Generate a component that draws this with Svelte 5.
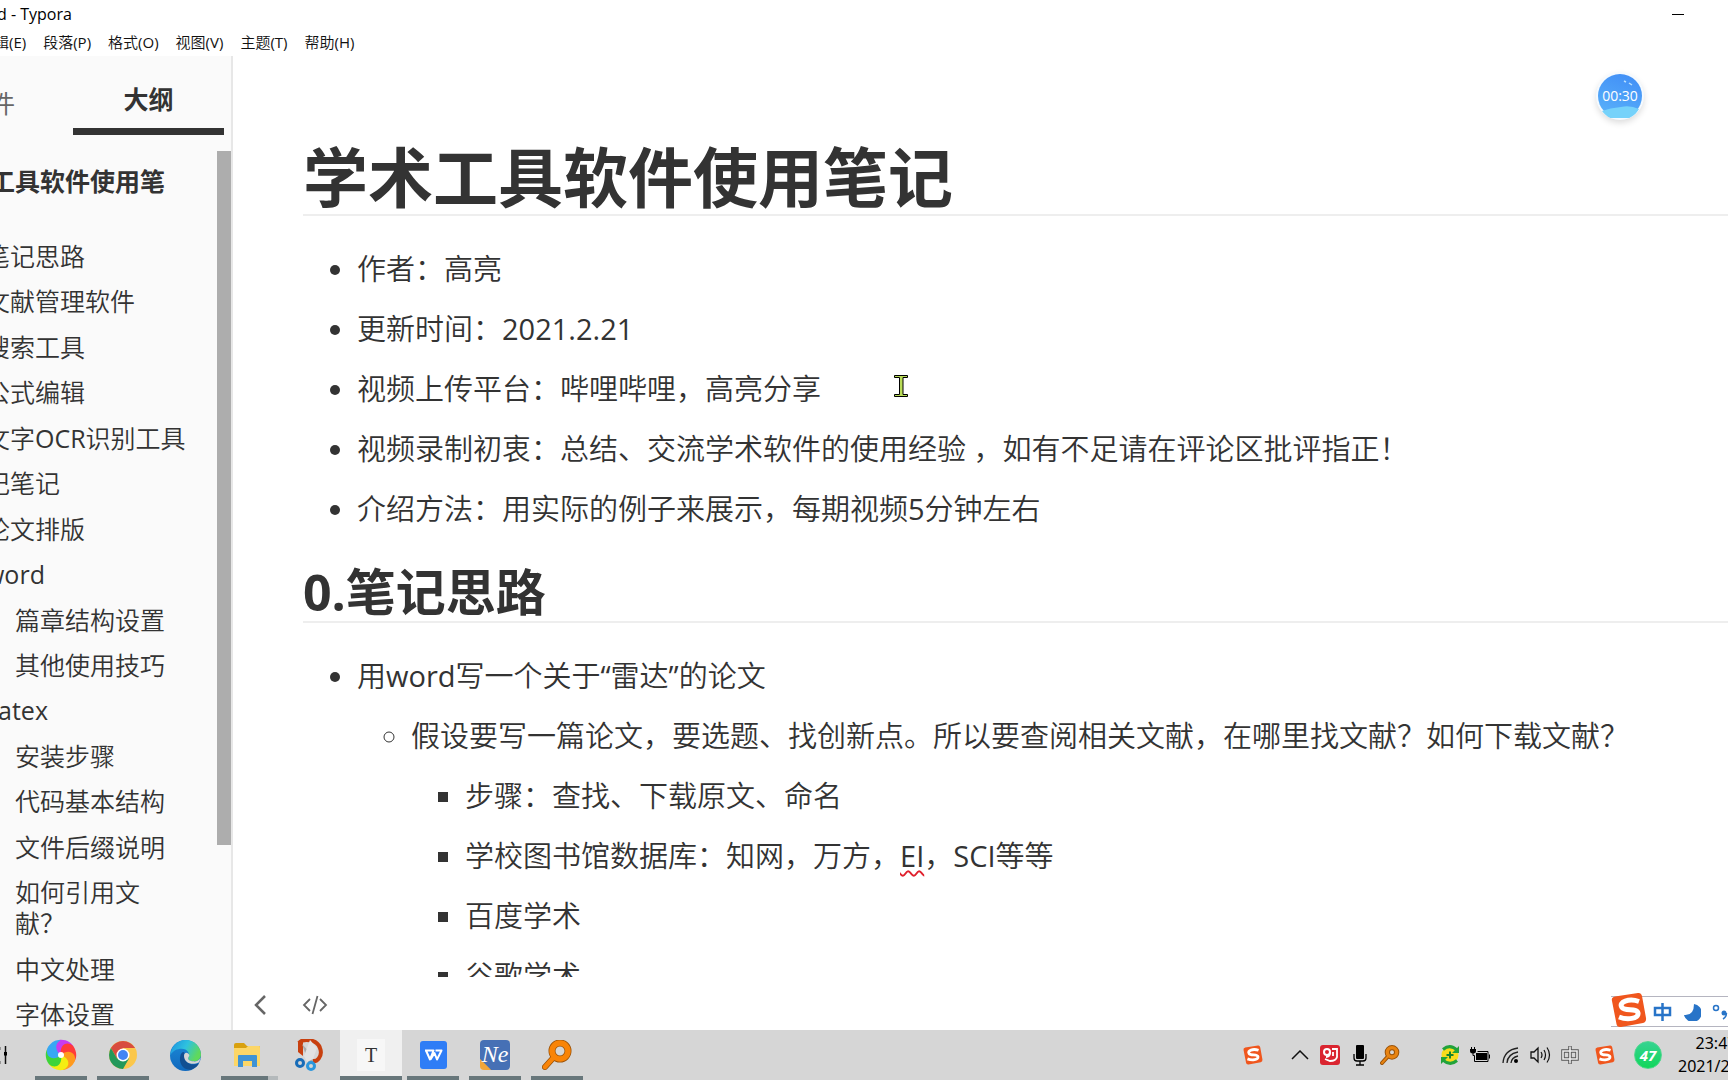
<script>
  const menus = ['辑(E)', '段落(P)', '格式(O)', '视图(V)', '主题(T)', '帮助(H)'];

  const outline = [
    { text: '笔记思路', level: 2 },
    { text: '文献管理软件', level: 2 },
    { text: '搜索工具', level: 2 },
    { text: '公式编辑', level: 2 },
    { text: '文字OCR识别工具', level: 2 },
    { text: '记笔记', level: 2 },
    { text: '论文排版', level: 2 },
    { text: 'word', level: 2 },
    { text: '篇章结构设置', level: 3 },
    { text: '其他使用技巧', level: 3 },
    { text: 'Latex', level: 2 },
    { text: '安装步骤', level: 3 },
    { text: '代码基本结构', level: 3 },
    { text: '文件后缀说明', level: 3 },
    { text: '如何引用文献？', level: 3 },
    { text: '中文处理', level: 3 },
    { text: '字体设置', level: 3 }
  ];

  const about = [
    '作者：高亮',
    '更新时间：2021.2.21',
    '视频上传平台：哔哩哔哩，高亮分享',
    '视频录制初衷：总结、交流学术软件的使用经验 ，如有不足请在评论区批评指正！',
    '介绍方法：用实际的例子来展示，每期视频5分钟左右'
  ];
  const petals = [0, 60, 120, 180, 240, 300];
  const petalColors = ['#c83cf0', '#ff3b3b', '#ff9a1f', '#f4ee12', '#3ed43a', '#38a8f4'];
</script>

{#snippet sogou(size)}
  <svg width={size} height={size} viewBox="0 0 36 36" aria-hidden="true">
    <path d="M1 9Q0 5.500 4 4.500L27 1Q30 .5 31 4L35 26Q35.500 30 32 31L10 35Q6 35.500 5.500 32Z" fill="#f0561d" />
    <path d="M28 9.500C18 6 7 10 11 15.500C14 19.500 26 16 27 21C28 27 16 28 8 25" fill="none" stroke="#fff" stroke-width="5" />
  </svg>
{/snippet}

<div class="app">
  <header class="titlebar">
    <span class="title">d - Typora</span>
    <button class="minimize" aria-label="最小化"><span class="dash"></span></button>
  </header>
  <nav class="menubar" aria-label="菜单">
    {#each menus as m}<button>{m}</button>{/each}
  </nav>

  <div class="workspace">
    <aside class="sidebar">
      <div class="tabs">
        <button class="tab files">件</button>
        <button class="tab active">大纲</button>
      </div>
      <div class="outline-wrap">
        <nav class="outline" aria-label="大纲">
          <a class="top" href="#top">工具软件使用笔</a>
          <div class="entries">
            {#each outline as o}
              <a class="level{o.level}" href="#{o.text}">{o.text}</a>
            {/each}
          </div>
        </nav>
        <div class="scroll"><div class="thumb"></div></div>
      </div>
    </aside>

    <section class="pane">
      <main class="editor">
        <h1 id="top">学术工具软件使用笔记</h1>
        <ul>
          {#each about as line}<li>{line}</li>{/each}
        </ul>
        <h2 id="笔记思路">0.笔记思路</h2>
        <ul>
          <li>用word写一个关于“雷达”的论文
            <ul>
              <li>假设要写一篇论文，要选题、找创新点。所以要查阅相关文献，在哪里找文献？如何下载文献？
                <ul>
                  <li>步骤：查找、下载原文、命名</li>
                  <li>学校图书馆数据库：知网，万方，<span class="typo">EI</span>，SCI等等</li>
                  <li>百度学术</li>
                  <li>谷歌学术</li>
                </ul>
              </li>
            </ul>
          </li>
        </ul>
      </main>
      <footer class="status">
        <button aria-label="收起侧边栏">
          <svg width="14" height="20" viewBox="0 0 14 20"><path d="M12 1L3 10L12 19" fill="none" stroke="#666" stroke-width="2.500" /></svg>
        </button>
        <button aria-label="源代码模式">
          <svg width="26" height="20" viewBox="0 0 26 20"><path d="M8 4L2 10L8 16M18 4L24 10L18 16M15.500 1L10.500 19" fill="none" stroke="#666" stroke-width="1.800" /></svg>
        </button>
      </footer>
    </section>
  </div>

  <footer class="taskbar">
    <div class="apps">
      <button class="task edge-cut" aria-label="任务视图">
        <svg width="8" height="22" viewBox="0 0 8 22"><path d="M5.500 2V20" stroke="#111" stroke-width="1.500" /><path d="M0 3v3M0 17v3" stroke="#555" /><rect x="4" y="8" width="3" height="3.500" /></svg>
      </button>
      <button class="task running" aria-label="360浏览器">
        <svg width="32" height="32" viewBox="-16 -16 32 32">
          {#each petals as a, i}
            <path d="M0 0C-9 -3 -10 -12 -2 -15C5 -16 11 -12 12.500 -8C7 -11 1 -8 0 0Z" fill={petalColors[i]} transform="rotate({a})" />
          {/each}
          <circle r="3" fill="#fff" />
        </svg>
      </button>
      <button class="task running" aria-label="Chrome">
        <svg width="28" height="28" viewBox="-14 -14 28 28">
          <circle r="14" fill="#fbc74b" />
          <path d="M0 -7H12.100A14 14 0 0 0 -12.100 -7L-6 3.500Z" fill="#d84c3f" />
          <path d="M-12.100 -7A14 14 0 0 0 0 14L6 3.500L-6 3.500Z" fill="#23985a" />
          <circle r="6.500" fill="#fff" /><circle r="5" fill="#4285f4" />
        </svg>
      </button>
      <button class="task" aria-label="Edge">
        <svg width="31" height="31" viewBox="0 0 32 32">
          <defs>
            <linearGradient id="eg" x1="0" y1="0" x2="1" y2="0.400"><stop offset="0" stop-color="#1a8fe0" /><stop offset=".55" stop-color="#2fc2df" /><stop offset="1" stop-color="#5fd95c" /></linearGradient>
            <linearGradient id="eb" x1="0" y1="0" x2="0" y2="1"><stop offset="0" stop-color="#1b8ad8" /><stop offset="1" stop-color="#1169bd" /></linearGradient>
          </defs>
          <circle cx="16" cy="16" r="16" fill="url(#eb)" />
          <path d="M1 12C4 2 12 0 16 0C26 0 32 8 32 15C32 20 28 22.500 24 22C20 21.500 18 20 19 18C21 14 18 9 12 9C7 9 3 11 0 16Z" fill="url(#eg)" />
          <path d="M11 15C8 24 14 32 22 30.500C26 29 28.500 27 30 24C22 28 14 23 15 15C15.500 12 13 11 11 15Z" fill="#124f92" />
          <path d="M20 16C19 12 14 12 14.500 17C15 23 22 27 30 23L32 18C30 21 27 22.500 24 22C20 21.500 18 20 19 18Z" fill="#d6d6d6" />
        </svg>
      </button>
      <button class="task running stacked" aria-label="文件资源管理器">
        <svg width="28" height="26" viewBox="0 0 28 26">
          <path d="M1 3Q1 1 3 1H11L14 4H26Q27 4 27 6V10H1Z" fill="#d9a10f" />
          <path d="M1 6H13L15 4H26Q27 4 27 6V24H1Z" fill="#fcd667" />
          <path d="M5 25V14Q5 13 6 13H23Q24 13 24 14V25H19V19H10V25Z" fill="#3f93d5" />
        </svg>
      </button>
      <button class="task" aria-label="截图工具">
        <svg width="28" height="32" viewBox="0 0 28 32">
          <path d="M4 4C8 -1 22 0 25 9C28 17 22 25 15 21" fill="none" stroke="#c8400f" stroke-width="4" />
          <path d="M3 3V13L8 17V3Z" fill="#c8400f" />
          <path d="M7 5L18 17L18 24L14 25Z" fill="#aaa" /><path d="M15 1L22 9L18 20L12 23L9 17Z" fill="#e2e2e2" />
          <circle cx="5" cy="24" r="3.500" fill="none" stroke="#176cb8" stroke-width="3" />
          <circle cx="16" cy="27" r="3.500" fill="none" stroke="#2b96dc" stroke-width="3" />
        </svg>
      </button>
      <button class="task running current" aria-label="Typora"><span class="typora">T</span></button>
      <button class="task running" aria-label="WPS">
        <svg width="27" height="28" viewBox="0 0 27 28"><rect width="27" height="28" rx="3" fill="#2e7df6" /><path d="M5 9.500H13.500L10 18.500L6 9.500M10.500 18.500L14.500 12L17 18.500L21.500 9.500H15.500" fill="none" stroke="#fff" stroke-width="2" stroke-linejoin="round" /></svg>
      </button>
      <button class="task running" aria-label="NoteExpress">
        <span class="ne">Ne</span>
      </button>
      <button class="task running" aria-label="Everything">
        <svg width="30" height="30" viewBox="0 0 30 30"><path d="M3 27L12 17" stroke="#9a5208" stroke-width="6" stroke-linecap="round" /><circle cx="18" cy="11" r="8" fill="none" stroke="#9a5208" stroke-width="7" /><path d="M3 27L12 17" stroke="#f98407" stroke-width="4.500" stroke-linecap="round" /><circle cx="18" cy="11" r="8" fill="none" stroke="#f98407" stroke-width="5.500" /></svg>
      </button>
    </div>

    <div class="tray">
      <span class="slot">{@render sogou(20)}</span>
      <div class="tray-icons">
        <span class="slot"><svg width="18" height="10" viewBox="0 0 18 10"><path d="M1 9L9 1L17 9" fill="none" stroke="#111" stroke-width="1.500" /></svg></span>
        <span class="slot"><svg width="20" height="20" viewBox="0 0 20 20"><rect width="20" height="20" rx="3" fill="#da2530" /><circle cx="7" cy="7" r="3" fill="none" stroke="#fff" stroke-width="2" /><path d="M10 7Q10 12 6 12M12 4H17V12Q16 16 10 16L5 14M13 7V11" fill="none" stroke="#fff" stroke-width="1.800" /></svg></span>
        <span class="slot"><svg width="14" height="22" viewBox="0 0 14 22"><rect x="3" y="1" width="8" height="14" rx="1" /><path d="M1 10V14Q1 17 4 17H10Q13 17 13 14V10M7 17V21M3 21H11" fill="none" stroke="#000" stroke-width="1.300" /></svg></span>
        <span class="slot"><svg width="20" height="20" viewBox="0 0 30 30"><path d="M3 27L12 17" stroke="#9a5208" stroke-width="6" stroke-linecap="round" /><circle cx="18" cy="11" r="7" fill="none" stroke="#9a5208" stroke-width="8" /><path d="M3 27L12 17" stroke="#e88412" stroke-width="3" stroke-linecap="round" /><circle cx="18" cy="11" r="7" fill="none" stroke="#e88412" stroke-width="5" /></svg></span>
        <span class="slot"></span>
        <span class="slot"><svg width="20" height="20" viewBox="0 0 20 20"><circle cx="10" cy="10" r="8.500" fill="#f9dc1c" /><path d="M3 4.500Q10 -1.500 17 5M17 15.500Q10 21.500 3 15" fill="none" stroke="#22a33a" stroke-width="3" /><path d="M19 1V8H12ZM1 19V12H8Z" fill="#22a33a" /><path d="M10 6.500V13.500M6.500 10H13.500" stroke="#17832c" stroke-width="2" /></svg></span>
        <span class="slot"><svg width="20" height="16" viewBox="0 0 20 16"><rect x="6" y="6" width="11" height="7" /><path d="M1.500 0V2M4.500 0V2" stroke="#000" /><path d="M0 2H6V4Q6 6.500 3 6.500Q0 6.500 0 4Z" /><path d="M3 6V8.500H4.500V14.500H18V4.500H7.500" fill="none" stroke="#000" /><path d="M19.500 7.500V11.500" stroke="#000" /></svg></span>
        <span class="slot"><svg width="17" height="17" viewBox="0 0 17 17"><path d="M1 16Q2 3 16 1M5 16Q5.500 7 16 5M9 16Q9.500 10.500 16 9" fill="none" stroke="#222" stroke-width="1.300" /><circle cx="14" cy="14" r="2" /></svg></span>
        <span class="slot"><svg width="21" height="18" viewBox="0 0 21 18"><path d="M1 6H4L8 2V16L4 12H1Z" fill="none" stroke="#111" stroke-width="1.300" /><path d="M11 6Q13 9 11 12M14 4Q17 9 14 14M17 1.500Q22 9 17 16.500" fill="none" stroke="#111" stroke-width="1.200" /></svg></span>
        <span class="slot"><svg width="18" height="20" viewBox="0 0 18 20"><path d="M2 6H16V14H2ZM9 1V19" fill="none" stroke="#555" stroke-width="3.500" /><path d="M2 6H16V14H2ZM9 1.500V18.500" fill="none" stroke="#eee" stroke-width="1.600" /></svg></span>
      </div>
      <span class="slot wide">{@render sogou(20)}</span>
      <span class="score">47</span>
      <div class="clock"><span>23:47</span><span>2021/2/21</span></div>
    </div>
  </footer>

  <div class="timer">
    <svg viewBox="0 0 44 44" aria-hidden="true"><path d="M4 37Q12 34 23 33Q32 31 41 35A22 22 0 0 1 4 37Z" fill="#76d2fa" /><path d="M26 7L28 8M31 9L34 11" stroke="#b8e0ff" stroke-width="1.500" /></svg>
    <span>00:30</span>
  </div>
  <svg class="caret" width="14" height="22" viewBox="0 0 14 22" aria-hidden="true">
    <path d="M.5 .5H13.500V2.500H9V19.500H13.500V21.500H.5V19.500H5.500V2.500H.5Z" fill="#b9dc58" stroke="#000" />
  </svg>
  <div class="ime">
    <span class="ime-logo">{@render sogou(36)}</span>
    <svg width="19" height="18" viewBox="0 0 19 18" aria-label="中文"><path d="M2 5H17V12H2ZM9.500 0V18" fill="none" stroke="#2874c8" stroke-width="2.500" /></svg>
    <svg width="18" height="18" viewBox="0 0 18 18" aria-hidden="true"><path d="M11 1A9 9 0 1 1 1 12Q11 13 11 1Z" fill="#2874c8" /></svg>
    <svg width="16" height="16" viewBox="0 0 16 16" aria-hidden="true"><circle cx="4" cy="4" r="2.500" fill="none" stroke="#2874c8" stroke-width="1.500" /><circle cx="12" cy="9" r="2.500" fill="#2874c8" /><path d="M14.500 9Q14.500 13 11 15" fill="none" stroke="#2874c8" stroke-width="1.500" /></svg>
  </div>
</div>

<style>
  :global(body) { margin: 0; }
  .app {
    position: relative;
    display: flex;
    flex-direction: column;
    height: 100vh;
    overflow: hidden;
    background: #fff;
    color: #333;
    font-family: "Open Sans", "Noto Sans CJK SC", sans-serif;
  }
  button {
    padding: 0;
    border: 0;
    background: none;
    color: inherit;
    font: inherit;
  }
  svg { display: block; flex: none; }

  .titlebar {
    display: flex;
    justify-content: space-between;
    align-items: center;
    height: 28px;
    padding-right: 44px;
    color: #000;
    font-size: 16px;
  }
  .title { margin-left: -3px; }
  .dash { display: block; width: 12px; height: 1px; background: #000; }
  .menubar {
    display: flex;
    gap: 17px;
    height: 28px;
    margin-left: -6px;
    color: #111;
    font-family: "Open Sans", "Noto Sans CJK SC DemiLight", "Noto Sans CJK SC", sans-serif;
    font-size: 15px;
    line-height: 28px;
    white-space: nowrap;
  }

  .workspace { display: flex; flex: 1; min-height: 0; }
  .sidebar {
    display: flex;
    flex-direction: column;
    flex: none;
    width: 231px;
    border-right: 2px solid #e7e7e7;
    background: #fafafa;
    font-size: 25px;
  }
  .tabs { display: flex; height: 79px; padding-right: 7px; }
  .tab { height: 79px; padding-top: 12px; box-sizing: border-box; }
  .files {
    display: flex;
    align-items: center;
    justify-content: flex-end;
    width: 83px;
    margin-left: -10px;
    padding-right: 58px;
    color: #666;
  }
  .active { flex: 1; border-bottom: 7px solid #333; font-weight: 700; }
  .outline-wrap { display: flex; flex: 1; min-height: 0; padding-top: 16px; }
  .outline {
    display: flex;
    flex-direction: column;
    flex: 1;
    min-width: 0;
    line-height: 31px;
  }
  .outline a { color: inherit; text-decoration: none; }
  .outline .top { height: 75px; padding-top: 15px; margin-left: -10px; font-weight: 700; white-space: nowrap; }
  .entries {
    display: flex;
    flex-direction: column;
    flex: 1;
    justify-content: space-between;
    font-family: "Open Sans", "Noto Sans CJK SC DemiLight", "Noto Sans CJK SC", sans-serif;
  }
  .level2 { margin-left: -15px; white-space: nowrap; }
  .level3 { margin-left: 15px; padding-right: 60px; margin-right: -20px; }
  .scroll { flex: none; width: 14px; }
  .thumb { height: 79%; background: #adadad; }

  .pane { display: flex; flex-direction: column; flex: 1; min-width: 0; }
  .editor {
    flex: 1;
    min-height: 0;
    overflow: hidden;
    padding: 84px 0 0 70px;
    box-sizing: border-box;
    font-size: 29px;
    line-height: 46px;
  }
  h1, h2 { margin: 0; border-bottom: 2px solid #eee; font-weight: 700; white-space: nowrap; }
  h1 { font-size: 65px; line-height: 74px; }
  h2 { margin-top: 32px; font-size: 50px; line-height: 57px; }
  ul {
    margin: 0;
    padding-left: 54px;
    font-family: "Open Sans", "Noto Sans CJK SC DemiLight", "Noto Sans CJK SC", sans-serif;
    list-style: disc;
  }
  h1 + ul, h2 + ul { margin-top: 30px; }
  li { white-space: nowrap; }
  li + li, li > ul { margin-top: 14px; }
  ul ul { list-style: circle; }
  ul ul ul { list-style: square; }
  .typo { text-decoration: underline wavy #e0202c 2px; text-underline-offset: 3px; }
  .status { display: flex; align-items: center; gap: 35px; height: 51px; padding: 2px 0 0 20px; }

  .taskbar { display: flex; justify-content: space-between; height: 50px; background: #d6d6d6; color: #000; }
  .apps, .tray, .tray-icons { display: flex; }
  .task {
    position: relative;
    display: flex;
    align-items: center;
    justify-content: center;
    width: 62px;
    height: 50px;
  }
  .edge-cut { width: 30px; justify-content: flex-start; }
  .running::after {
    content: "";
    position: absolute;
    right: 5px;
    bottom: 0;
    left: 5px;
    height: 4px;
    background: #68777b;
  }
  .stacked::after { border-right: 10px solid #b4b9bb; right: 0; }
  .current { background: #f0f0f0; }
  .current::after { right: 0; left: 0; }
  .typora {
    width: 28px;
    background: #f7f7f7;
    color: #333;
    font: 20px/32px "Liberation Serif", serif;
  }
  .ne {
    width: 30px;
    height: 30px;
    border-radius: 4px;
    background: linear-gradient(45deg, #f0a63a 18%, #4670b5 19%);
    color: #fff;
    font: italic 24px/28px "Liberation Serif", serif;
  }
  .slot { display: flex; align-items: center; justify-content: center; width: 30px; height: 50px; }
  .tray { margin-right: -33px; }
  .tray-icons { margin-left: 17px; }
  .wide { width: 40px; }
  .score {
    align-self: center;
    width: 26px;
    margin: 0 9px;
    border: 1px solid #52d78f;
    border-radius: 50%;
    background: linear-gradient(#35d392, #12d65a);
    color: #fff;
    font-size: 15px;
    font-style: italic;
    font-weight: 700;
    line-height: 26px;
    text-align: center;
  }
  .clock {
    display: flex;
    flex-direction: column;
    align-items: center;
    justify-content: center;
    width: 90px;
    font-family: "Noto Sans", "Open Sans", sans-serif;
    font-size: 16px;
    line-height: 23px;
  }

  .timer {
    position: absolute;
    top: 74px;
    right: 86px;
    width: 44px;
    height: 44px;
    border-radius: 50%;
    background: linear-gradient(200deg, #3f8cf6, #5cb4fa);
    box-shadow: 0 0 0 2px #f4faff, 0 3px 6px 2px #ddd;
    color: #fff;
    font-size: 14px;
    line-height: 44px;
    text-align: center;
  }
  .timer svg { position: absolute; inset: 0; }
  .timer span { position: relative; }
  .caret { position: absolute; top: 375px; left: 894px; }
  .ime {
    position: absolute;
    right: 0;
    bottom: 53px;
    display: flex;
    align-items: center;
    gap: 11px;
    height: 29px;
    border: solid #b5b5c0;
    border-width: 1px 0;
    background: #fff;
  }
  .ime-logo { margin: -4px -5px 0 0; }
</style>
